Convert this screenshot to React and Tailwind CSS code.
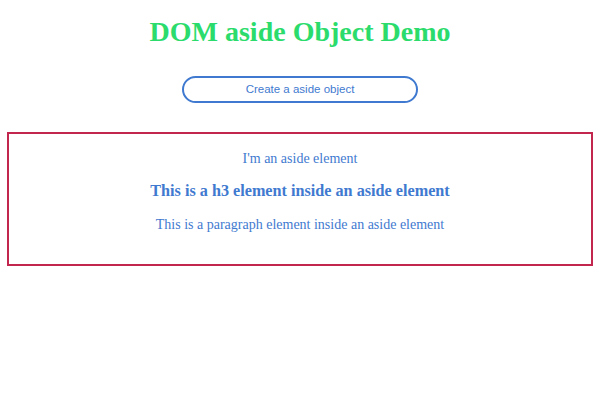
import React from 'react'

export default function App() {
  return (
    <div className="min-h-[403px] bg-white font-['Liberation_Serif',serif]">
      <h1 className="pt-[14px] text-center text-[28px] font-bold leading-[36px] text-[#2bdc6c]">
        DOM aside Object Demo
      </h1>
      <div className="mt-[26px] flex justify-center">
        <button className="h-[27px] w-[236px] rounded-full border-2 border-[#3f7ad0] font-['Liberation_Sans',sans-serif] text-[11.5px] text-[#3f7ad0]">
          Create a aside object
        </button>
      </div>
      <aside className="mx-[7px] mt-[29px] flex h-[134px] flex-col items-center border-2 border-[#c2254d] pt-[16px] text-[#3f7ad0]">
        <p className="text-[14px] leading-[18px]">I'm an aside element</p>
        <h3 className="mt-[13px] text-[16.2px] font-bold leading-[20px]">This is a h3 element inside an aside element</h3>
        <p className="mt-[15px] text-[14px] leading-[18px]">This is a paragraph element inside an aside element</p>
      </aside>
    </div>
  )
}
